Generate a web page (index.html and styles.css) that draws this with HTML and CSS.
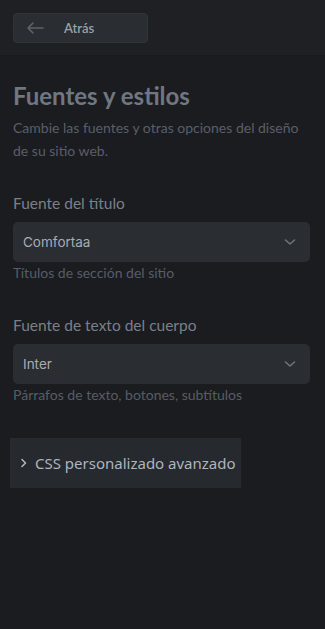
FILE: index.html
```html
<!DOCTYPE html>
<html lang="es">
<head>
    <meta charset="UTF-8">
    <meta name="viewport" content="width=device-width, initial-scale=1.0">
    <title>Fuentes y estilos</title>
    <link rel="stylesheet" href="styles.css">
</head>
<body>
    <div class="topbar">
        <button class="back">
            <svg width="18" height="12" viewBox="0 0 18 12"><path d="M17 6H2M7 1L2 6l5 5" fill="none" stroke="#5d636c" stroke-width="1.6" stroke-linecap="round" stroke-linejoin="round"/></svg>
            <span>Atrás</span>
        </button>
    </div>
    <div class="content">
        <h1>Fuentes y estilos</h1>
        <p class="desc">Cambie las fuentes y otras opciones del diseño de su sitio web.</p>

        <div class="field">
            <div class="label">Fuente del título</div>
            <div class="select">
                <span class="value">Comfortaa</span>
                <svg width="12" height="8" viewBox="0 0 12 8"><path d="M1.5 2l4.5 4 4.5-4" fill="none" stroke="#6f757d" stroke-width="1.6" stroke-linecap="round" stroke-linejoin="round"/></svg>
            </div>
            <div class="hint">Títulos de sección del sitio</div>
        </div>

        <div class="field">
            <div class="label">Fuente de texto del cuerpo</div>
            <div class="select">
                <span class="value">Inter</span>
                <svg width="12" height="8" viewBox="0 0 12 8"><path d="M1.5 2l4.5 4 4.5-4" fill="none" stroke="#6f757d" stroke-width="1.6" stroke-linecap="round" stroke-linejoin="round"/></svg>
            </div>
            <div class="hint">Párrafos de texto, botones, subtítulos</div>
        </div>

        <div class="advanced">
            <svg width="8" height="10" viewBox="0 0 8 10"><path d="M2 1.5L5.5 5 2 8.5" fill="none" stroke="#aeb5bd" stroke-width="1.6" stroke-linecap="round" stroke-linejoin="round"/></svg>
            <span>CSS personalizado avanzado</span>
        </div>
    </div>
</body>
</html>
```

FILE: styles.css
```css
body {
    margin: 0;
    background-color: #1b1c20;
    font-family: Lato, "Open Sans", sans-serif;
}
.topbar {
    height: 56px;
    background-color: #1e2023;
    border-bottom: 1px solid #191a1d;
    padding: 13px;
    box-sizing: border-box;
}
.back {
    display: flex;
    align-items: center;
    width: 135px;
    height: 30px;
    padding: 0 0 0 12px;
    background-color: #2a2d31;
    border: 1px solid #303337;
    border-radius: 4px;
    font-family: Lato, sans-serif;
    font-size: 13px;
    font-weight: 600;
    color: #9ba1a9;
    cursor: pointer;
}
.back span {
    margin-left: 20px;
}
.content {
    padding: 25px 15px 0 13px;
}
h1 {
    margin: 0;
    font-size: 24px;
    font-weight: 700;
    color: #707781;
    line-height: 30px;
}
.desc {
    margin: 5px 0 0;
    font-size: 14px;
    line-height: 23px;
    color: #595f68;
}
.field {
    margin-top: 31px;
}
.field + .field {
    margin-top: 34px;
}
.label {
    font-size: 15.5px;
    line-height: 20px;
    color: #7a8089;
}
.select {
    display: flex;
    align-items: center;
    justify-content: space-between;
    height: 40px;
    margin-top: 9px;
    padding: 0 14px 0 10px;
    background-color: #2a2d31;
    border-radius: 5px;
}
.value {
    font-family: Inter, sans-serif;
    font-size: 13.5px;
    color: #a7acb3;
}
.hint {
    margin-top: 3px;
    font-size: 14px;
    line-height: 16px;
    color: #575d66;
}
.advanced {
    display: flex;
    align-items: center;
    width: 231px;
    height: 50px;
    margin: 35px 0 0 -3px;
    padding-left: 10px;
    box-sizing: border-box;
    background-color: #26292d;
    font-family: "Noto Sans", sans-serif;
    font-size: 15px;
    color: #aeb5bd;
}
.advanced span {
    margin-left: 7px;
}
```
